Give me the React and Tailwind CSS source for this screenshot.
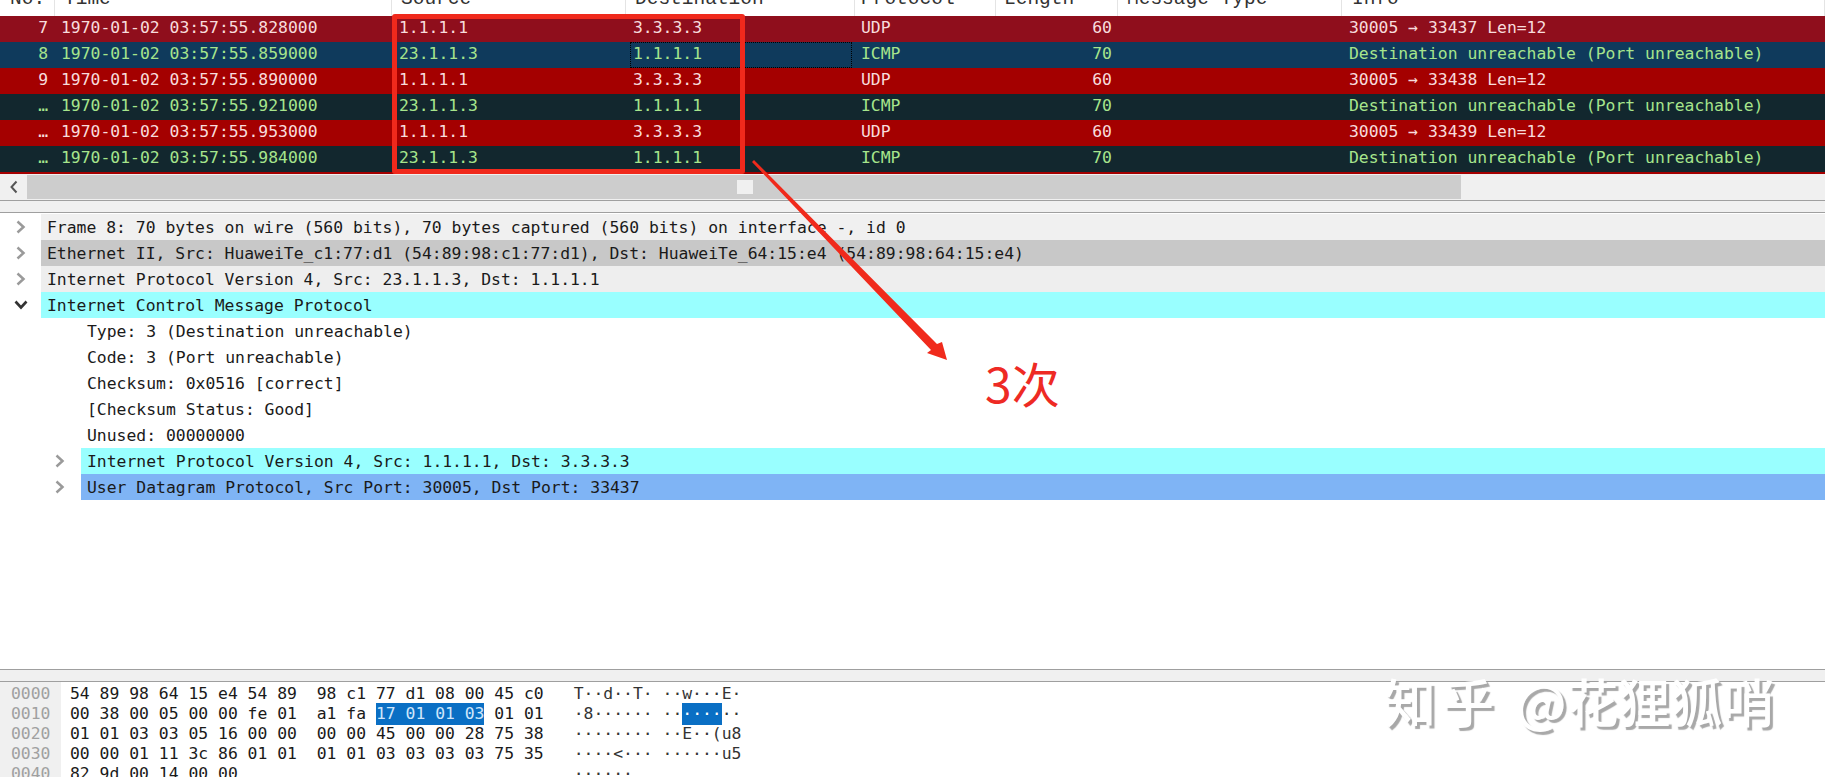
import React from 'react';

const columns = [
  { title: 'No.', width: 'w-[55px]', head: 'pl-[10px]', cell: 'pr-[7px] text-right' },
  { title: 'Time', width: 'w-[337px]', head: 'pl-[9px]', cell: 'pl-[6px]' },
  { title: 'Source', width: 'w-[234px]', head: 'pl-[9px]', cell: 'pl-[7px]' },
  { title: 'Destination', width: 'w-[229px]', head: 'pl-[9px]', cell: 'pl-[7px]' },
  { title: 'Protocol', width: 'w-[141px]', head: 'pl-[6px]', cell: 'pl-[6px]' },
  { title: 'Length', width: 'w-[122px]', head: 'pl-[8px]', cell: 'pr-[6px] text-right' },
  { title: 'Message Type', width: 'w-[224px]', head: 'pl-[9px]', cell: 'pl-[6px]' },
  { title: 'Info', width: 'flex-1', head: 'pl-[10px]', cell: 'pl-[7px]' },
];

const udpRow = 'bg-[#a40000] text-[#f8dcdc]';
const icmpRow = 'bg-[#12272e] text-[#a6e58c]';

const packets = [
  { style: 'bg-[#8f0e1c] text-[#f8dcdc]', cells: ['7', '1970-01-02 03:57:55.828000', '1.1.1.1', '3.3.3.3', 'UDP', '60', '', '30005 → 33437 Len=12'] },
  { style: 'bg-[#0f3a5c] text-[#a6e58c]', cells: ['8', '1970-01-02 03:57:55.859000', '23.1.1.3', '1.1.1.1', 'ICMP', '70', '', 'Destination unreachable (Port unreachable)'], focus: 3 },
  { style: udpRow, cells: ['9', '1970-01-02 03:57:55.890000', '1.1.1.1', '3.3.3.3', 'UDP', '60', '', '30005 → 33438 Len=12'] },
  { style: icmpRow, cells: ['…', '1970-01-02 03:57:55.921000', '23.1.1.3', '1.1.1.1', 'ICMP', '70', '', 'Destination unreachable (Port unreachable)'] },
  { style: udpRow, cells: ['…', '1970-01-02 03:57:55.953000', '1.1.1.1', '3.3.3.3', 'UDP', '60', '', '30005 → 33439 Len=12'] },
  { style: icmpRow, cells: ['…', '1970-01-02 03:57:55.984000', '23.1.1.3', '1.1.1.1', 'ICMP', '70', '', 'Destination unreachable (Port unreachable)'] },
];

const details = [
  { text: 'Frame 8: 70 bytes on wire (560 bits), 70 bytes captured (560 bits) on interface -, id 0', bg: 'bg-[#f0f0f0]', arrow: 'right' },
  { text: 'Ethernet II, Src: HuaweiTe_c1:77:d1 (54:89:98:c1:77:d1), Dst: HuaweiTe_64:15:e4 (54:89:98:64:15:e4)', bg: 'bg-[#c8c8c8]', arrow: 'right' },
  { text: 'Internet Protocol Version 4, Src: 23.1.1.3, Dst: 1.1.1.1', bg: 'bg-[#eeeeee]', arrow: 'right' },
  { text: 'Internet Control Message Protocol', bg: 'bg-[#99ffff]', arrow: 'down' },
  { text: 'Type: 3 (Destination unreachable)', nested: true },
  { text: 'Code: 3 (Port unreachable)', nested: true },
  { text: 'Checksum: 0x0516 [correct]', nested: true },
  { text: '[Checksum Status: Good]', nested: true },
  { text: 'Unused: 00000000', nested: true },
  { text: 'Internet Protocol Version 4, Src: 1.1.1.1, Dst: 3.3.3.3', bg: 'bg-[#99ffff]', arrow: 'right', nested: true },
  { text: 'User Datagram Protocol, Src Port: 30005, Dst Port: 33437', bg: 'bg-[#7fb4f5]', arrow: 'right', nested: true },
];

const hexRows = [
  ['0000', ['54 89 98 64 15 e4 54 89  98 c1 77 d1 08 00 45 c0'], ['T··d··T· ··w···E·']],
  ['0010', ['00 38 00 05 00 00 fe 01  a1 fa ', '17 01 01 03', ' 01 01'], ['·8······ ··', '····', '··']],
  ['0020', ['01 01 03 03 05 16 00 00  00 00 45 00 00 28 75 38'], ['········ ··E··(u8']],
  ['0030', ['00 00 01 11 3c 86 01 01  01 01 03 03 03 03 75 35'], ['····<··· ······u5']],
  ['0040', ['82 9d 00 14 00 00'], ['······']],
];

const Chevron = ({ dir }) => {
  if (dir === 'down') {
    return (
      <svg width="14" height="10" viewBox="0 0 14 10" fill="none">
        <polyline points="1.5,1.5 7,7.5 12.5,1.5" stroke="#333" strokeWidth="2.6" />
      </svg>
    );
  }
  return (
    <svg width="12" height="14" viewBox="0 0 12 14" fill="none">
      <polyline points="2.5,1.5 8.5,7 2.5,12.5" stroke="#9a9a9a" strokeWidth="2.5" />
    </svg>
  );
};

const Splitter = () => (
  <div className="h-[13px] shrink-0 bg-[#f0f0f0] border-y border-[#9f9f9f]" />
);

const HexLine = ({ parts, mark }) => (
  <>
    {parts.map((part, i) =>
      i === 1 ? (
        <span key={i} className={`inline-block h-[22px] -my-px leading-[22px] bg-[#0a6fc4] ${mark}`}>{part}</span>
      ) : (
        <span key={i}>{part}</span>
      )
    )}
  </>
);

export default function App() {
  return (
    <div className="relative flex h-[777px] w-[1825px] flex-col overflow-hidden bg-white font-['DejaVu_Sans_Mono',monospace] text-[16.4px] text-[#1a1a1a]">
      {/* packet list */}
      <div className="flex h-4 shrink-0 overflow-hidden bg-white font-['Liberation_Mono',monospace] text-[19.5px] text-[#333]">
        {columns.map((col) => (
          <div key={col.title} className={`${col.width} ${col.head} h-4 shrink-0 border-r border-[#e4e4e4] whitespace-pre`}>
            <div className="-mt-[5px] leading-[8px]">{col.title}</div>
          </div>
        ))}
      </div>
      {packets.map((p) => (
        <div key={p.cells[1]} className={`flex h-[26px] shrink-0 leading-[24px] ${p.style}`}>
          {columns.map((col, i) => (
            <div key={col.title} className={`${col.width} ${col.cell} relative shrink-0 whitespace-pre`}>
              {p.cells[i]}
              {p.focus === i && (
                <div className="absolute inset-y-0 left-[4px] right-[3px] border border-dotted border-black" />
              )}
            </div>
          ))}
        </div>
      ))}
      <div className="h-[2px] shrink-0 bg-[#a40000]" />

      {/* horizontal scrollbar */}
      <div className="flex h-[26px] shrink-0 items-center bg-[#f0f0f0]">
        <div className="flex w-[27px] justify-center">
          <svg width="10" height="14" viewBox="0 0 10 14" fill="none">
            <polyline points="7.5,1.5 2.5,7 7.5,12.5" stroke="#555" strokeWidth="2" />
          </svg>
        </div>
        <div className="flex h-6 w-[1434px] items-center bg-[#cdcdcd] pl-[710px]">
          <div className="h-[14px] w-4 bg-[#f0f0f0]" />
        </div>
      </div>
      <Splitter />

      {/* packet details */}
      <div className="flex-1 pt-px">
        {details.map((row) => (
          <div key={row.text} className="flex h-[26px] leading-[28px]">
            <div className={`flex items-center justify-center ${row.nested ? 'w-[81px] pl-[38px]' : 'w-[41px]'}`}>
              {row.arrow && <Chevron dir={row.arrow} />}
            </div>
            <div className={`flex-1 pl-[6px] whitespace-pre ${row.bg || ''}`}>{row.text}</div>
          </div>
        ))}
      </div>
      <Splitter />

      {/* hex dump */}
      <div className="flex h-[95px] shrink-0 overflow-hidden">
        <div className="w-[61px] shrink-0 bg-[#f0f0f0] pl-[11px] pt-[2px] leading-[20px] text-[#a0a0a0]">
          {hexRows.map(([offset]) => (
            <div key={offset} className="h-5">{offset}</div>
          ))}
        </div>
        <div className="pl-[9px] pt-[2px] leading-[20px] whitespace-pre">
          {hexRows.map(([offset, hex]) => (
            <div key={offset} className="h-5"><HexLine parts={hex} mark="text-[#cfe6fb]" /></div>
          ))}
        </div>
        <div className="pl-[30px] pt-[2px] leading-[20px] whitespace-pre text-[#333]">
          {hexRows.map(([offset, , ascii]) => (
            <div key={offset} className="h-5"><HexLine parts={ascii} mark="text-white" /></div>
          ))}
        </div>
      </div>

      {/* annotations on top of the screenshot */}
      <div className="absolute left-[392px] top-[14px] h-[160px] w-[353px] rounded-[3px] border-[5px] border-[#f0291c]" />
      <svg className="pointer-events-none absolute left-0 top-0" width="1825" height="777">
        <polygon points="754,160 937,344 942,342 947,360 927,353 931,350 752,162" fill="#f02a1c" />
      </svg>
      <div className="absolute left-[985px] top-[350px] font-['Noto_Sans_CJK_SC',sans-serif] text-[48px] leading-[64px] text-[#ee2a24]">3次</div>
      <div className="absolute left-[1384px] top-[663px] flex font-['Noto_Sans_CJK_SC',sans-serif] text-[52px] font-medium leading-[76px] text-white [text-shadow:3px_3px_1px_#a8a8a8]">
        <span className="tracking-[6px]">知乎</span>
        <span className="ml-[16px]">@花狸狐哨</span>
      </div>
    </div>
  );
}
